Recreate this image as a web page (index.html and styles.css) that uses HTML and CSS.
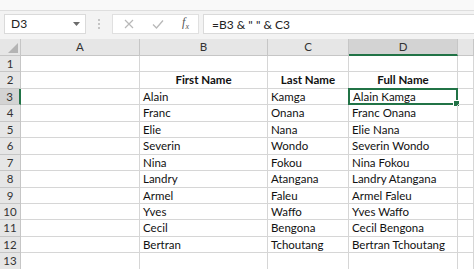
FILE: index.html
```html
<!DOCTYPE html>
<html lang="en">
<head>
  <meta charset="UTF-8" />
  <meta name="viewport" content="width=device-width, initial-scale=1.0" />
  <title>Full Name</title>
  <link rel="stylesheet" href="styles.css">
</head>
<body>
  <!-- top edge of the ribbon -->
  <div class="ribbon-edge"></div>

  <!-- formula bar -->
  <div class="formula-bar">
    <div class="name-box">
      <span>D3</span>
      <svg class="arrow" width="7" height="4" viewBox="0 0 7 4"><path d="M0 0 L7 0 L3.5 4 Z" fill="#6b6b6b"/></svg>
    </div>
    <div class="grip">
      <i></i><i></i><i></i>
    </div>
    <div class="fx-box">
      <svg width="10" height="10" viewBox="0 0 10 10"><path d="M1 1 L9 9 M9 1 L1 9" stroke="#b8b8b8" stroke-width="1.2"/></svg>
      <svg width="12" height="10" viewBox="0 0 12 10"><path d="M1 5.5 L4.5 9 L11 1.5" stroke="#b8b8b8" stroke-width="1.3" fill="none"/></svg>
      <span class="fx">f<sub>x</sub></span>
    </div>
    <div class="formula-input">=B3 &amp; " " &amp; C3</div>
  </div>

  <!-- sheet -->
  <div class="sheet">
    <div class="corner"><svg width="10" height="10" viewBox="0 0 10 10"><path d="M10 0 L10 10 L0 10 Z" fill="#b4b4b4"/></svg></div>
    <div class="col-head">A</div>
    <div class="col-head">B</div>
    <div class="col-head">C</div>
    <div class="col-head active">D</div>
    <div class="col-head"></div>

    <div class="row-head">1</div><div class="cell"></div><div class="cell"></div><div class="cell"></div><div class="cell"></div><div class="cell"></div>

    <div class="row-head">2</div><div class="cell"></div>
    <div class="cell bold">First Name</div><div class="cell bold">Last Name</div><div class="cell bold">Full Name</div><div class="cell"></div>

    <div class="row-head active">3</div><div class="cell"></div>
    <div class="cell">Alain</div><div class="cell">Kamga</div><div class="cell selected">Alain Kamga<b class="handle"></b></div><div class="cell"></div>

    <div class="row-head">4</div><div class="cell"></div>
    <div class="cell">Franc</div><div class="cell">Onana</div><div class="cell">Franc Onana</div><div class="cell"></div>

    <div class="row-head">5</div><div class="cell"></div>
    <div class="cell">Elie</div><div class="cell">Nana</div><div class="cell">Elie Nana</div><div class="cell"></div>

    <div class="row-head">6</div><div class="cell"></div>
    <div class="cell">Severin</div><div class="cell">Wondo</div><div class="cell">Severin Wondo</div><div class="cell"></div>

    <div class="row-head">7</div><div class="cell"></div>
    <div class="cell">Nina</div><div class="cell">Fokou</div><div class="cell">Nina Fokou</div><div class="cell"></div>

    <div class="row-head">8</div><div class="cell"></div>
    <div class="cell">Landry</div><div class="cell">Atangana</div><div class="cell">Landry Atangana</div><div class="cell"></div>

    <div class="row-head">9</div><div class="cell"></div>
    <div class="cell">Armel</div><div class="cell">Faleu</div><div class="cell">Armel Faleu</div><div class="cell"></div>

    <div class="row-head">10</div><div class="cell"></div>
    <div class="cell">Yves</div><div class="cell">Waffo</div><div class="cell">Yves Waffo</div><div class="cell"></div>

    <div class="row-head">11</div><div class="cell"></div>
    <div class="cell">Cecil</div><div class="cell">Bengona</div><div class="cell">Cecil Bengona</div><div class="cell"></div>

    <div class="row-head">12</div><div class="cell"></div>
    <div class="cell">Bertran</div><div class="cell">Tchoutang</div><div class="cell">Bertran Tchoutang</div><div class="cell"></div>

    <div class="row-head">13</div><div class="cell"></div><div class="cell"></div><div class="cell"></div><div class="cell"></div><div class="cell"></div>
  </div>
</body>
</html>
```

FILE: styles.css
```css
body {
  margin: 0;
  background: #f3f3f3;
  font-family: Lato, "Liberation Sans", sans-serif;
  overflow: hidden;
  width: 474px;
  height: 269px;
}

.ribbon-edge {
  height: 10px;
  background: #f9f9f9;
  border-bottom: 1px solid #dedede;
}

.formula-bar {
  display: flex;
  align-items: center;
  height: 21px;
  padding: 2px 0 0 4px;
}

.name-box {
  box-sizing: border-box;
  width: 82px;
  height: 20px;
  background: #fff;
  border: 1px solid #dadada;
  display: flex;
  align-items: center;
  justify-content: space-between;
  padding: 0 5px 0 6px;
  font-size: 12px;
  color: #222;
}

.grip {
  width: 26px;
  display: flex;
  flex-direction: column;
  align-items: center;
  gap: 2px;
}

.grip i {
  width: 2px;
  height: 2px;
  background: #c4c4c4;
}

.fx-box {
  box-sizing: border-box;
  width: 87px;
  height: 20px;
  background: #fff;
  border: 1px solid #e0e0e0;
  display: flex;
  align-items: center;
  justify-content: space-between;
  padding: 0 9px 0 11px;
}

.fx {
  font-family: "Liberation Serif", serif;
  font-style: italic;
  font-size: 12px;
  color: #555;
}

.fx sub {
  font-size: 8px;
}

.formula-input {
  box-sizing: border-box;
  flex: 1;
  height: 20px;
  margin-left: 4px;
  background: #fff;
  border: 1px solid #dadada;
  border-right: none;
  padding: 2px 0 0 8px;
  font-size: 12px;
  color: #222;
}

.sheet {
  margin-top: 5px;
  display: grid;
  grid-template-columns: 21px 119px 128px 81px 109px 1fr;
  grid-template-rows: 17px;
  grid-auto-rows: 16.45px;
  background: #fff;
}

.corner,
.col-head,
.row-head,
.cell {
  box-sizing: border-box;
  border-right: 1px solid #d6d6d6;
  border-bottom: 1px solid #d6d6d6;
}

.corner {
  background: #e6e6e6;
  border-color: #c6c6c6;
  display: flex;
  align-items: flex-end;
  justify-content: flex-end;
  padding: 0 2px 2px 0;
}

.col-head {
  background: #e6e6e6;
  border-color: #c6c6c6;
  font-size: 11.5px;
  color: #333;
  text-align: center;
  line-height: 16px;
}

.col-head.active {
  background: #d3d3d3;
  border-bottom: 2px solid #217346;
  color: #333;
}

.row-head {
  background: #e6e6e6;
  border-color: #c6c6c6;
  font-size: 11.5px;
  color: #333;
  text-align: center;
  line-height: 15px;
}

.row-head.active {
  background: #d3d3d3;
  border-right: 2px solid #217346;
}

.cell {
  position: relative;
  font-size: 11.5px;
  color: #111;
  padding: 0 3px;
  line-height: 15px;
  white-space: nowrap;
}

.cell.bold {
  font-weight: bold;
  text-align: center;
}

.cell.selected {
  border: 2px solid #217346;
  margin: -1px 0 0 -1px;
  padding: 0 2px 0 3px;
  line-height: 13px;
}

.handle {
  position: absolute;
  right: -4px;
  bottom: -4px;
  width: 5px;
  height: 5px;
  background: #217346;
  border: 1px solid #fff;
}
```
